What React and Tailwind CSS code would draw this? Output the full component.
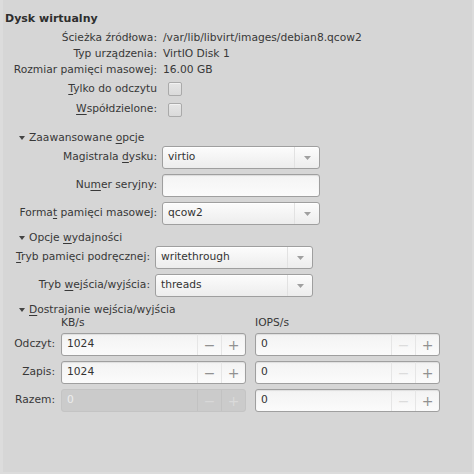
import React from "react";

const font = { fontFamily: '"DejaVu Sans", "Liberation Sans", sans-serif' };

function U({ children }) {
  return <span className="underline decoration-1 underline-offset-2">{children}</span>;
}

function Arrow({ color = "#8a8a8a" }) {
  return (
    <svg width="7" height="4" viewBox="0 0 7 4">
      <path d="M0 0h7L3.5 4z" fill={color} />
    </svg>
  );
}

function Expander({ children }) {
  return (
    <div className="flex items-center gap-[4px] pl-[16px] text-[#383838]">
      <svg width="6" height="4" viewBox="0 0 6 4">
        <path d="M0 0h6L3 4z" fill="#444" />
      </svg>
      <span>{children}</span>
    </div>
  );
}

function Combo({ value }) {
  return (
    <div className="flex h-[23px] w-[158px] items-center rounded-[3px] border border-[#9f9f9f] bg-linear-to-b from-[#fcfcfc] to-[#ededed] shadow-[inset_0_1px_0_#fff]">
      <span className="flex-1 pl-[5px] text-[#333]">{value}</span>
      <span className="flex h-full w-[25px] items-center justify-center border-l border-[#e2e2e2]">
        <Arrow color="#a0a0a0" />
      </span>
    </div>
  );
}

function Entry() {
  return (
    <div className="h-[23px] w-[158px] rounded-[3px] border border-[#9f9f9f] bg-linear-to-b from-[#f4f4f4] to-[#fbfbfb] shadow-[inset_0_1px_1px_#dcdcdc]" />
  );
}

function Spin({ value, disabled, minusOff }) {
  const box = disabled
    ? "border-[#c4c4c4] bg-[#cbcbcb]"
    : "border-[#9f9f9f] bg-linear-to-b from-[#f3f3f3] to-[#fbfbfb] shadow-[inset_0_1px_1px_#dedede]";
  const sign = disabled ? "text-[#dadada]" : "text-[#919191]";
  const minus = disabled ? "text-[#d8d8d8]" : minusOff ? "text-[#dcdcdc]" : "text-[#919191]";
  const sep = disabled ? "border-[#c2c2c2]" : "border-[#e6e6e6]";
  return (
    <div className={`flex h-[23px] w-[185px] items-center rounded-[3px] border ${box}`}>
      <span className={`flex-1 pl-[5px] ${disabled ? "text-[#ededed]" : "text-[#333]"}`}>{value}</span>
      <span className={`flex h-full w-[24px] items-center justify-center border-l ${sep} text-[14px] ${minus}`}>−</span>
      <span className={`flex h-full w-[24px] items-center justify-center border-l ${sep} text-[14px] ${sign}`}>+</span>
    </div>
  );
}

function Check() {
  return (
    <div className="h-[14px] w-[14px] rounded-[2px] border border-[#aaaaaa] bg-linear-to-b from-[#e6e6e6] to-[#dadada] shadow-[inset_0_1px_0_#f2f2f2]" />
  );
}

export default function App() {
  return (
    <div
      style={font}
      className="h-[474px] w-[474px] overflow-hidden border-b-2 border-l-[3px] border-r-2 border-[#dcdcdc] bg-[#d6d6d6] pt-[10px] text-[10.7px] leading-none text-[#383838]"
    >
      {/* title */}
      <div className="flex h-[16px] items-center pl-[2px] text-[11px] font-bold text-[#2e2e2e]">Dysk wirtualny</div>

      {/* info rows */}
      <div className="mt-[4px] grid grid-cols-[154px_auto] gap-x-[6px]">
        <div className="flex h-[16px] items-center justify-end">Ścieżka źródłowa:</div>
        <div className="flex h-[16px] items-center">/var/lib/libvirt/images/debian8.qcow2</div>
        <div className="flex h-[16px] items-center justify-end">Typ urządzenia:</div>
        <div className="flex h-[16px] items-center">VirtIO Disk 1</div>
        <div className="flex h-[17px] items-center justify-end">Rozmiar pamięci masowej:</div>
        <div className="flex h-[17px] items-center">16.00 GB</div>
        <div className="flex h-[20px] items-center justify-end">
          <span>
            <U>T</U>ylko do odczytu
          </span>
        </div>
        <div className="flex h-[20px] items-center pl-[5px]">
          <Check />
        </div>
        <div className="flex h-[21px] items-center justify-end">
          <span>
            <U>W</U>spółdzielone:
          </span>
        </div>
        <div className="flex h-[21px] items-center pl-[5px]">
          <Check />
        </div>
      </div>

      {/* advanced */}
      <div className="mt-[10px] flex h-[16px] items-center">
        <Expander>
          Zaawansowane <U>o</U>pcje
        </Expander>
      </div>
      <div className="grid grid-cols-[154px_158px] items-center gap-x-[5px] gap-y-[5px]">
        <div className="text-right">
          Magistrala <U>d</U>ysku:
        </div>
        <Combo value="virtio" />
        <div className="text-right">
          Nu<U>m</U>er seryjny:
        </div>
        <Entry />
        <div className="text-right">
          Forma<U>t</U> pamięci masowej:
        </div>
        <Combo value="qcow2" />
      </div>

      {/* performance */}
      <div className="flex h-[21px] items-center pt-[6px]">
        <Expander>
          Opcje <U>w</U>ydajności
        </Expander>
      </div>
      <div className="grid grid-cols-[147px_158px] items-center gap-x-[5px] gap-y-[5px]">
        <div className="text-right">
          <U>T</U>ryb pamięci podręcznej:
        </div>
        <Combo value="writethrough" />
        <div className="text-right">
          Tryb <U>w</U>ejścia/wyjścia:
        </div>
        <Combo value="threads" />
      </div>

      {/* io tune */}
      <div className="flex h-[21px] items-center pt-[6px]">
        <Expander>
          <U>D</U>ostrajanie wejścia/wyjścia
        </Expander>
      </div>
      <div className="grid grid-cols-[52px_185px_185px] items-center gap-x-[6px] gap-y-[5px]">
        <div />
        <div className="flex h-[10px] items-start">KB/s</div>
        <div className="flex h-[10px] items-start pl-[3px]">IOPS/s</div>
        <div className="text-right">Odczyt:</div>
        <Spin value="1024" />
        <div className="pl-[3px]">
          <Spin value="0" minusOff />
        </div>
        <div className="text-right">Zapis:</div>
        <Spin value="1024" />
        <div className="pl-[3px]">
          <Spin value="0" minusOff />
        </div>
        <div className="text-right">Razem:</div>
        <Spin value="0" disabled />
        <div className="pl-[3px]">
          <Spin value="0" minusOff />
        </div>
      </div>
    </div>
  );
}
